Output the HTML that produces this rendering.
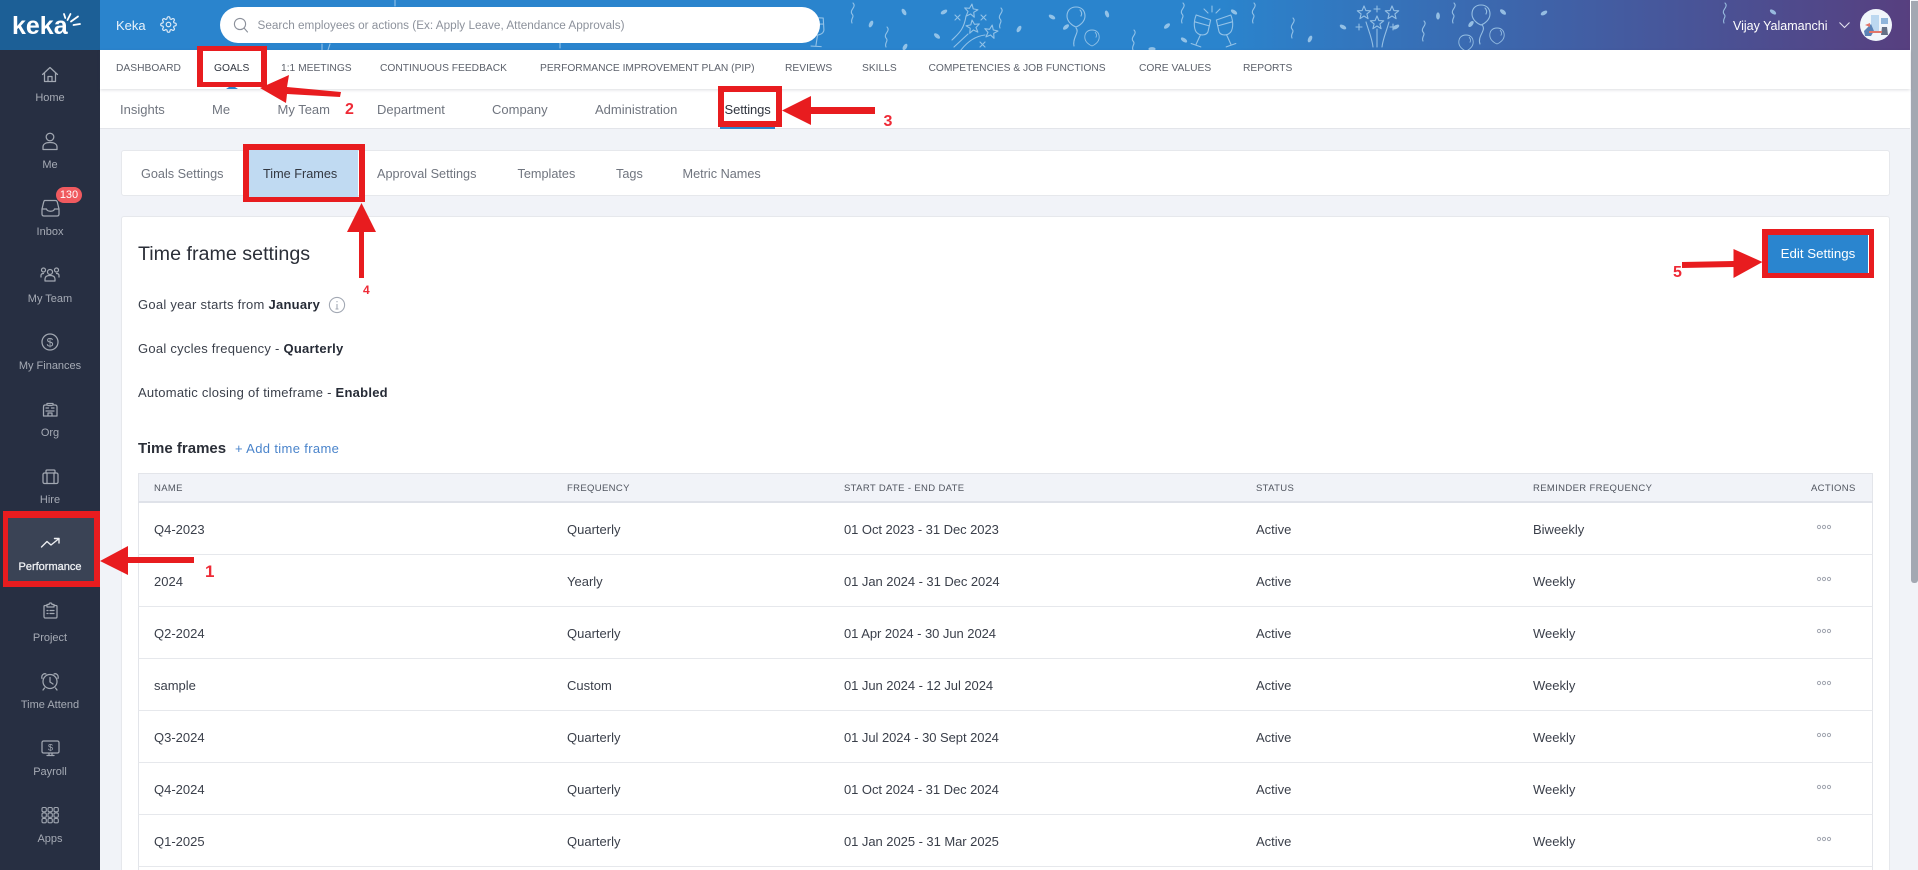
<!DOCTYPE html>
<html lang="en">
<head>
<meta charset="utf-8">
<title>Keka - Time frame settings</title>
<style>
*{box-sizing:border-box}
html,body{margin:0;padding:0;width:1918px;height:870px;overflow:hidden;background:#f1f3f8;font-family:"Liberation Sans",Arial,sans-serif;color:#2f3440}
#wrap{position:relative;width:1918px;height:870px;overflow:hidden}
.a{position:absolute}
.t{position:absolute;white-space:nowrap;line-height:16px;height:16px;margin-top:-8px}
#side{position:absolute;left:0;top:50px;width:100px;height:820px;background:#272f42}
.sl{position:absolute;left:0;width:100px;text-align:center;font-size:11px;line-height:14px;height:14px;margin-top:-6px;color:#a6abb5;white-space:nowrap}
.nav{font-size:10.25px;color:#5c616b}
.sub{font-size:13px;color:#70757f}
.tab{font-size:12.7px;color:#70757f}
.line{font-size:13px;color:#3b404b;letter-spacing:.25px}
.line b{color:#262b36}
.th{font-size:9.5px;letter-spacing:.35px;color:#50555f}
.r{position:absolute;left:138px;width:1735px;height:52px;border-bottom:1px solid #e6e8ec;border-left:1px solid #e3e5ea;border-right:1px solid #e3e5ea;background:#fff}
.r span{position:absolute;top:19px;line-height:16px;font-size:13px;color:#3a3f4a;white-space:nowrap}
.r span:nth-child(1){left:15px}
.r span:nth-child(2){left:428px}
.r span:nth-child(3){left:705px;letter-spacing:-.05px}
.r span:nth-child(4){left:1117px}
.r span:nth-child(5){left:1394px}
.r svg{position:absolute;left:1677px;top:21px}
.num{position:absolute;color:#ee2a36;font-weight:bold;line-height:16px;height:16px;margin-top:-8px;white-space:nowrap}
.box{position:absolute;border-style:solid;border-color:#e81c1f}
</style>
</head>
<body>
<div id="wrap">

<!-- header -->
<div class="a" style="left:100px;top:0;width:1810px;height:50px;background:linear-gradient(90deg,#2a84cd 0,#2a84cd 62%,#3f62a8 80%,#573f7f 100%)"></div>
<div class="a" style="left:0;top:0;width:100px;height:50px;background:#1c5f96"></div>
<div class="a" style="left:1910px;top:0;width:8px;height:870px;background:#f1f3f8"></div>
<div class="a" style="left:1910px;top:0;width:1px;height:89px;background:#fff"></div>
<div class="a" style="left:1911px;top:1px;width:7px;height:582px;background:#a3a8b2;border-radius:0 0 3px 3px"></div>

<!-- confetti -->
<svg class="a" style="left:0;top:0" width="1910" height="50" viewBox="0 0 1910 50" fill="none" stroke="#a5cdec" stroke-width="1.1" stroke-linecap="round" stroke-linejoin="round">
<defs>
<polygon id="st" points="0,-7 1.9,-2.4 6.7,-2.2 2.9,.9 4.1,5.7 0,3 -4.1,5.7 -2.9,.9 -6.7,-2.2 -1.9,-2.4"/>
<g id="bl"><path d="M0-10C6-10 9-6 9-1 9 5 3 9 0 10-3 9-9 5-9-1-9-6-6-10 0-10Z"/><path d="M4-7C6-5 6-3 5-1"/></g>
<path id="sq" d="M1-10C5-6-3-3 0 1 3 4-2 6 0 10"/>
<ellipse id="lf" cx="0" cy="0" rx="3.6" ry="1.9" fill="#a5cdec" stroke="none"/>
<g id="gl"><path d="M-8-8 7-5 6 7C5 11-1 12-4 10-8 8-10 0-8-8Z"/><path d="M-1 11-4 21M-9 21 1 23M-8.5-1 6.5 1"/></g>
</defs>
<g opacity=".85">
<use href="#st" transform="translate(971,11) rotate(8)"/>
<use href="#st" transform="translate(973,27) rotate(-8)"/>
<use href="#st" transform="translate(991,32) rotate(10)"/>
<path d="M952 40C958 34 964 30 966 16M954 47 968 34M961 50C968 41 976 36 985 35M955 15l5 5m0-5-5 5M981 15l5 5m0-5-5 5M980 42l5 5m0-5-5 5"/>
<use href="#bl" transform="translate(1076,17)"/>
<path d="M1076 28C1080 32 1072 38 1074 46"/>
<use href="#bl" transform="translate(1092,38) scale(.8)"/>
<use href="#gl" transform="translate(1203,24) rotate(8)"/>
<use href="#gl" transform="translate(1224,24) scale(-1,1) rotate(8)"/>
<path d="M1212 6V12M1204 9 1208 13M1220 9 1216 13"/>
<use href="#sq" transform="translate(1000,18)"/>
<use href="#sq" transform="translate(1133,40)"/>
<use href="#sq" transform="translate(1182,13)"/>
<use href="#sq" transform="translate(1253,13)"/>
<use href="#sq" transform="translate(852,13)"/>
<use href="#sq" transform="translate(886,37)"/>
<use href="#sq" transform="translate(1292,28)"/>
<use href="#sq" transform="translate(1423,31)"/>
<use href="#sq" transform="translate(1453,13)"/>
<use href="#sq" transform="translate(1724,13)"/>
<use href="#st" transform="translate(1364,13)"/>
<use href="#st" transform="translate(1392,13)"/>
<use href="#st" transform="translate(1377,23)"/>
<path d="M1377 29V47M1373 47C1372 38 1369 32 1366 22M1382 47C1383 38 1387 30 1389 22M1377 6V12M1374 9H1380M1359 24V30M1356 27H1362M1393 24V30M1390 27H1396"/>
<use href="#bl" transform="translate(1481,15)"/>
<path d="M1482 25C1487 30 1477 36 1480 44"/>
<use href="#bl" transform="translate(1497,36) scale(.8)"/>
<use href="#bl" transform="translate(1466,43) scale(.8)"/>
<use href="#gl" transform="translate(817,24) rotate(-8)"/>
<path d="M395 0V6M322 44V50M560 41V48M330 44 328 50"/>
<g>
<use href="#lf" transform="translate(944,12) rotate(-30)"/><use href="#lf" transform="translate(937,36) rotate(40)"/>
<use href="#lf" transform="translate(1019,29) rotate(-60)"/><use href="#lf" transform="translate(1052,17) rotate(30)"/>
<use href="#lf" transform="translate(1066,27) rotate(-40)"/><use href="#lf" transform="translate(1107,14) rotate(70)"/>
<use href="#lf" transform="translate(1167,26) rotate(-40)"/><use href="#lf" transform="translate(1184,40) rotate(35)"/>
<use href="#lf" transform="translate(1234,12) rotate(35)"/><use href="#lf" transform="translate(1152,49)"/>
<use href="#lf" transform="translate(871,24) rotate(-65)"/><use href="#lf" transform="translate(904,12) rotate(60)"/>
<use href="#lf" transform="translate(905,47) rotate(-60)"/>
<use href="#lf" transform="translate(1310,39) rotate(-65)"/><use href="#lf" transform="translate(1343,27) rotate(30)"/>
<use href="#lf" transform="translate(1396,27) rotate(-30)"/><use href="#lf" transform="translate(1438,16) rotate(90)"/>
<use href="#lf" transform="translate(1471,24) rotate(-50)"/><use href="#lf" transform="translate(1503,12) rotate(40)"/>
<use href="#lf" transform="translate(1544,13) rotate(-30)"/><use href="#lf" transform="translate(1773,12) rotate(35)"/>
</g>
</g>
</svg>

<!-- logo -->
<div class="a" style="left:12px;top:12px;font-size:25px;line-height:28px;font-weight:bold;color:#fff;height:28px">keka</div>
<svg class="a" style="left:0;top:0" width="100" height="50" fill="none" stroke="#fff" stroke-width="1.8" stroke-linecap="round"><path d="M64 14 65.3 18M70.5 14 67.5 20M78 16.5 71 21.5M80 24 73.5 25"/></svg>

<div class="t" style="left:116px;top:26px;font-size:13px;color:#e9f2fa">Keka</div>
<svg class="a" style="left:160px;top:16px" width="17" height="17" viewBox="0 0 24 24" fill="none" stroke="#dbe9f6" stroke-width="1.7" stroke-linecap="round" stroke-linejoin="round"><circle cx="12" cy="12" r="3.2"/><path d="M19.4 15a1.65 1.65 0 0 0 .33 1.82l.06.06a2 2 0 0 1 0 2.83 2 2 0 0 1-2.83 0l-.06-.06a1.65 1.65 0 0 0-1.82-.33 1.65 1.65 0 0 0-1 1.51V21a2 2 0 0 1-2 2 2 2 0 0 1-2-2v-.09A1.65 1.65 0 0 0 9 19.4a1.65 1.65 0 0 0-1.82.33l-.06.06a2 2 0 0 1-2.83 0 2 2 0 0 1 0-2.83l.06-.06a1.65 1.65 0 0 0 .33-1.82 1.65 1.65 0 0 0-1.51-1H3a2 2 0 0 1-2-2 2 2 0 0 1 2-2h.09A1.65 1.65 0 0 0 4.6 9a1.65 1.65 0 0 0-.33-1.82l-.06-.06a2 2 0 0 1 0-2.83 2 2 0 0 1 2.83 0l.06.06a1.65 1.65 0 0 0 1.82.33H9a1.65 1.65 0 0 0 1-1.51V3a2 2 0 0 1 2-2 2 2 0 0 1 2 2v.09a1.65 1.65 0 0 0 1 1.51 1.65 1.65 0 0 0 1.82-.33l.06-.06a2 2 0 0 1 2.83 0 2 2 0 0 1 0 2.83l-.06.06a1.65 1.65 0 0 0-.33 1.82V9a1.65 1.65 0 0 0 1.51 1H21a2 2 0 0 1 2 2 2 2 0 0 1-2 2h-.09a1.65 1.65 0 0 0-1.51 1z"/></svg>

<!-- search -->
<div class="a" style="left:220px;top:7px;width:600px;height:36px;background:#fff;border-radius:18px"></div>
<svg class="a" style="left:233px;top:17px" width="16" height="16" fill="none" stroke="#8b909a" stroke-width="1.1" stroke-linecap="round"><circle cx="7" cy="7" r="5.6"/><path d="M11 11 14.5 15"/></svg>
<div class="t" style="left:257.5px;top:26px;font-size:11.75px;color:#8d929c">Search employees or actions (Ex: Apply Leave, Attendance Approvals)</div>

<!-- user -->
<div class="t" style="left:1733px;top:26px;font-size:12.5px;color:#fff">Vijay Yalamanchi</div>
<svg class="a" style="left:1838px;top:21px" width="13" height="9" fill="none" stroke="#e3e2f0" stroke-width="1.1"><path d="M1.5 1.5 6.5 6.5 11.5 1.5"/></svg>
<svg class="a" style="left:1860px;top:9px" width="32" height="32" viewBox="0 0 32 32"><circle cx="16" cy="16" r="16" fill="#f1f6fb"/><rect x="11" y="6" width="8" height="17" fill="#bcd8f0"/><rect x="21" y="9" width="7" height="6" fill="#8fb5da"/><path d="M4 22 11 15 14 22 11 27H5Z" fill="#5c82b5"/><path d="M5 16 10 14 10 18Z" fill="#e2766a"/><path d="M22 18 27 18 28 26 21 26Z" fill="#647085"/><rect x="9" y="22" width="13" height="2" fill="#e2766a"/></svg>

<!-- nav -->
<div class="a" style="left:100px;top:50px;width:1810px;height:39px;background:#fff;box-shadow:0 1px 3px rgba(60,70,90,.18);z-index:2"></div>
<div class="a" style="left:100px;top:89px;width:1810px;height:40px;background:#fff;border-bottom:1px solid #e3e5ea"></div>
<div style="position:absolute;left:0;top:0;z-index:3">
<div class="t nav" style="left:116px;top:69px">DASHBOARD</div>
<div class="t nav" style="left:214px;top:69px;color:#30353f">GOALS</div>
<div class="t nav" style="left:281px;top:69px">1:1 MEETINGS</div>
<div class="t nav" style="left:380px;top:69px">CONTINUOUS FEEDBACK</div>
<div class="t nav" style="left:540px;top:69px">PERFORMANCE IMPROVEMENT PLAN (PIP)</div>
<div class="t nav" style="left:785px;top:69px">REVIEWS</div>
<div class="t nav" style="left:862px;top:69px">SKILLS</div>
<div class="t nav" style="left:928.5px;top:69px">COMPETENCIES &amp; JOB FUNCTIONS</div>
<div class="t nav" style="left:1139px;top:69px">CORE VALUES</div>
<div class="t nav" style="left:1243px;top:69px">REPORTS</div>
<div class="a" style="left:226px;top:85px;width:0;height:0;border-left:6px solid transparent;border-right:6px solid transparent;border-bottom:4px solid #2a84cd"></div>
</div>
<div class="t sub" style="left:120px;top:110px">Insights</div>
<div class="t sub" style="left:212px;top:110px">Me</div>
<div class="t sub" style="left:277.5px;top:110px">My Team</div>
<div class="t sub" style="left:377px;top:110px">Department</div>
<div class="t sub" style="left:492px;top:110px">Company</div>
<div class="t sub" style="left:595px;top:110px">Administration</div>
<div class="t sub" style="left:724.5px;top:110px;color:#30353f;letter-spacing:-.1px">Settings</div>
<div class="a" style="left:720px;top:127px;width:55px;height:2px;background:#2a84cd"></div>

<!-- tabs card -->
<div class="a" style="left:121px;top:150px;width:1769px;height:46px;background:#fff;border:1px solid #e6e8ec;border-radius:3px"></div>
<div class="a" style="left:249px;top:150px;width:109px;height:47px;background:#c0daf2"></div>
<div class="t tab" style="left:141px;top:174px">Goals Settings</div>
<div class="t tab" style="left:263px;top:174px;color:#333842">Time Frames</div>
<div class="t tab" style="left:377px;top:174px">Approval Settings</div>
<div class="t tab" style="left:517.5px;top:174px">Templates</div>
<div class="t tab" style="left:616px;top:174px">Tags</div>
<div class="t tab" style="left:682.5px;top:174px">Metric Names</div>

<!-- main card -->
<div class="a" style="left:121px;top:216px;width:1769px;height:654px;background:#fff;border:1px solid #e6e8ec;border-bottom:0;border-radius:3px 3px 0 0"></div>
<div class="a" style="left:138px;top:243px;font-size:19.7px;line-height:22px;color:#2b2f38;white-space:nowrap">Time frame settings</div>
<div class="a" style="left:1768px;top:235px;width:100px;height:38px;background:#2a85cf;color:#fff;font-size:13.3px;line-height:38px;text-align:center;white-space:nowrap">Edit Settings</div>

<div class="t line" style="left:138px;top:305px">Goal year starts from <b>January</b></div>
<svg class="a" style="left:328px;top:296px" width="18" height="18" fill="none" stroke="#a3a9b4" stroke-width="1.1"><circle cx="9" cy="9" r="7.6"/><path d="M9 8V13M7.5 13H10.5M9 5V6.2"/></svg>
<div class="t line" style="left:138px;top:349px">Goal cycles frequency - <b>Quarterly</b></div>
<div class="t line" style="left:138px;top:393px">Automatic closing of timeframe - <b>Enabled</b></div>
<div class="t" style="left:138px;top:449px;font-size:15px;font-weight:bold;color:#2b2f38">Time frames</div>
<div class="t" style="left:235px;top:449px;font-size:13px;letter-spacing:.35px;color:#4a84cb">+ Add time frame</div>

<!-- table -->
<div class="a" style="left:138px;top:473px;width:1735px;height:30px;background:#f1f3f8;border:1px solid #e3e5ea;border-bottom:2px solid #dfe2e9"></div>
<div class="t th" style="left:154px;top:489px">NAME</div>
<div class="t th" style="left:567px;top:489px">FREQUENCY</div>
<div class="t th" style="left:844px;top:489px">START DATE - END DATE</div>
<div class="t th" style="left:1256px;top:489px">STATUS</div>
<div class="t th" style="left:1533px;top:489px">REMINDER FREQUENCY</div>
<div class="t th" style="left:1811px;top:489px">ACTIONS</div>

<div class="r" style="top:503px"><span>Q4-2023</span><span>Quarterly</span><span>01 Oct 2023 - 31 Dec 2023</span><span>Active</span><span>Biweekly</span><svg width="16" height="6" fill="none" stroke="#a4a8b2"><circle cx="3" cy="3" r="1.6"/><circle cx="8" cy="3" r="1.6"/><circle cx="13" cy="3" r="1.6"/></svg></div>
<div class="r" style="top:555px"><span>2024</span><span>Yearly</span><span>01 Jan 2024 - 31 Dec 2024</span><span>Active</span><span>Weekly</span><svg width="16" height="6" fill="none" stroke="#a4a8b2"><circle cx="3" cy="3" r="1.6"/><circle cx="8" cy="3" r="1.6"/><circle cx="13" cy="3" r="1.6"/></svg></div>
<div class="r" style="top:607px"><span>Q2-2024</span><span>Quarterly</span><span>01 Apr 2024 - 30 Jun 2024</span><span>Active</span><span>Weekly</span><svg width="16" height="6" fill="none" stroke="#a4a8b2"><circle cx="3" cy="3" r="1.6"/><circle cx="8" cy="3" r="1.6"/><circle cx="13" cy="3" r="1.6"/></svg></div>
<div class="r" style="top:659px"><span>sample</span><span>Custom</span><span>01 Jun 2024 - 12 Jul 2024</span><span>Active</span><span>Weekly</span><svg width="16" height="6" fill="none" stroke="#a4a8b2"><circle cx="3" cy="3" r="1.6"/><circle cx="8" cy="3" r="1.6"/><circle cx="13" cy="3" r="1.6"/></svg></div>
<div class="r" style="top:711px"><span>Q3-2024</span><span>Quarterly</span><span>01 Jul 2024 - 30 Sept 2024</span><span>Active</span><span>Weekly</span><svg width="16" height="6" fill="none" stroke="#a4a8b2"><circle cx="3" cy="3" r="1.6"/><circle cx="8" cy="3" r="1.6"/><circle cx="13" cy="3" r="1.6"/></svg></div>
<div class="r" style="top:763px"><span>Q4-2024</span><span>Quarterly</span><span>01 Oct 2024 - 31 Dec 2024</span><span>Active</span><span>Weekly</span><svg width="16" height="6" fill="none" stroke="#a4a8b2"><circle cx="3" cy="3" r="1.6"/><circle cx="8" cy="3" r="1.6"/><circle cx="13" cy="3" r="1.6"/></svg></div>
<div class="r" style="top:815px"><span>Q1-2025</span><span>Quarterly</span><span>01 Jan 2025 - 31 Mar 2025</span><span>Active</span><span>Weekly</span><svg width="16" height="6" fill="none" stroke="#a4a8b2"><circle cx="3" cy="3" r="1.6"/><circle cx="8" cy="3" r="1.6"/><circle cx="13" cy="3" r="1.6"/></svg></div>
<div class="a" style="left:138px;top:867px;width:1735px;height:3px;border-left:1px solid #e3e5ea;border-right:1px solid #e3e5ea"></div>

<!-- sidebar -->
<div id="side"></div>
<div class="a" style="left:8px;top:518px;width:86px;height:63px;background:#3a4355"></div>
<svg class="a" style="left:0;top:0" width="100" height="870" viewBox="0 0 100 870" fill="none" stroke="#a2a8b2" stroke-width="1.25" stroke-linecap="round" stroke-linejoin="round">
<path d="M42.5 74.5 50 67.5 57.5 74.5M44.5 73V81.5H55.5V73M48 81.5V76.5H52V81.5"/>
<circle cx="50" cy="137" r="3.8"/><path d="M43 149.5V147C43 144 46 142.5 50 142.5S57 144 57 147V149.5Z"/>
<path d="M44.5 200.5H55.5C56.5 200.5 57 201 57.3 202L59 209V214C59 215.3 58.3 216 57 216H44C42.7 216 42 215.3 42 214V209L43.7 202C44 201 44.5 200.5 44.5 200.5ZM42 209H46.5C47.3 212 53.7 212 54.5 209H59"/>
<circle cx="50" cy="272" r="2.5"/><circle cx="43.5" cy="270" r="2"/><circle cx="56.5" cy="270" r="2"/>
<path d="M45 281V279C45 276.5 47 275.5 50 275.5S55 276.5 55 279V281ZM41 277V275.5C41 274 42 273.5 43.5 273.5M59 277V275.5C59 274 58 273.5 56.5 273.5"/>
<circle cx="50" cy="342" r="8"/>
<path d="M43.5 416V407C43.5 405.5 44 405 45 405H47V403.5H53V405H55C56 405 57 405.5 57 407V416ZM46 408H48.5M51.5 408H54M46 411H54M48 416V413H52V416M48 405.5H52"/>
<rect x="43" y="473" width="15" height="10.5" rx="1.5"/><path d="M46 473V471C46 470.3 46.5 470 47 470H54C54.7 470 55 470.3 55 471V473M47 473V483.5M54 473V483.5"/>
<path stroke="#eceef1" stroke-width="1.4" d="M41.5 547 47 541.5 51 545 58.5 539M54.5 538.5H59V543"/>
<path d="M46.5 605.5H45C44.3 605.5 44 606 44 606.5V616.5C44 617.2 44.5 618 45 618H56C56.7 618 57 617.2 57 616.5V606.5C57 606 56.7 605.5 56 605.5H54.5M47 607V604.5H49C49 602.5 52 602.5 52 604.5H54V607ZM47 610.5H48M50 610.5H54M47 613.5H48M50 613.5H54"/>
<circle cx="50" cy="681.5" r="7"/><path d="M50 677.5V682L53 684M42 678.5C41 675 44 673 46 674M58 678.5C59 675 56 673 54 674M44.5 688 43 690M55.5 688 57 690"/>
<rect x="42" y="741" width="17" height="12" rx="1.5"/><path d="M47 755.5H54M49 753V755.5M52 753V755.5"/>
<g stroke-width="1.1"><rect x="42" y="807.5" width="4.3" height="4.3" rx="1.3"/><rect x="48" y="807.5" width="4.3" height="4.3" rx="1.3"/><rect x="54" y="807.5" width="4.3" height="4.3" rx="1.3"/><rect x="42" y="813" width="4.3" height="4.3" rx="1.3"/><rect x="48" y="813" width="4.3" height="4.3" rx="1.3"/><rect x="54" y="813" width="4.3" height="4.3" rx="1.3"/><rect x="42" y="818.5" width="4.3" height="4.3" rx="1.3"/><rect x="48" y="818.5" width="4.3" height="4.3" rx="1.3"/><rect x="54" y="818.5" width="4.3" height="4.3" rx="1.3"/></g>
<text x="50" y="346.5" text-anchor="middle" font-size="12" fill="#a2a8b2" stroke="none" font-family="Liberation Sans">$</text>
<text x="50.5" y="750.5" text-anchor="middle" font-size="9" fill="#a2a8b2" stroke="none" font-family="Liberation Sans">$</text>
</svg>
<div class="sl" style="top:97px">Home</div>
<div class="sl" style="top:164px">Me</div>
<div class="sl" style="top:231px">Inbox</div>
<div class="sl" style="top:298px">My Team</div>
<div class="sl" style="top:365px">My Finances</div>
<div class="sl" style="top:432px">Org</div>
<div class="sl" style="top:499px">Hire</div>
<div class="sl" style="top:566px;color:#eceef1;-webkit-text-stroke:.3px #eceef1">Performance</div>
<div class="sl" style="top:637px">Project</div>
<div class="sl" style="top:704px">Time Attend</div>
<div class="sl" style="top:771px">Payroll</div>
<div class="sl" style="top:838px">Apps</div>
<div class="a" style="left:56px;top:187px;width:26px;height:16px;border-radius:8px;background:#f05a5f;color:#fff;font-size:11px;line-height:16px;text-align:center">130</div>

<!-- annotations -->
<div style="position:absolute;left:0;top:0;z-index:5">
<div class="box" style="left:3px;top:511px;width:97px;height:76px;border-width:7px 6px 6px 5px"></div>
<div class="box" style="left:197px;top:46px;width:70px;height:41px;border-width:5px 6px"></div>
<div class="box" style="left:243px;top:144px;width:122px;height:58px;border-width:6px 6px 5px 6px"></div>
<div class="box" style="left:718px;top:86px;width:64px;height:41px;border-width:6px 6px 6px 6px"></div>
<div class="box" style="left:1762px;top:229px;width:112px;height:49px;border-width:6px 5px 5px 6px"></div>
<svg class="a" style="left:0;top:0" width="1918" height="870" fill="#e81c1f" stroke="none">
<polygon points="100,561 128,546 128,557 194,557 194,563 128,563 128,575"/>
<polygon points="260,88 289,75 287,87 341,92 340,97 287,94 286,103"/>
<polygon points="782,110.5 811,96 811,107 875,107 875,114 811,114 811,125"/>
<polygon points="361.5,203 376,232 364,232 364,278 359,278 359,232 347,232"/>
<polygon points="1762.5,262 1733.5,249 1733.5,261 1682,262 1682,268 1733.5,267 1733.5,278"/>
</svg>
<div class="num" style="left:205px;top:572px;font-size:17px">1</div>
<div class="num" style="left:345px;top:110px;font-size:16px">2</div>
<div class="num" style="left:883.5px;top:122px;font-size:16px">3</div>
<div class="num" style="left:363px;top:290px;font-size:12px">4</div>
<div class="num" style="left:1673px;top:273px;font-size:16px">5</div>
</div>
</div>
</body>
</html>
